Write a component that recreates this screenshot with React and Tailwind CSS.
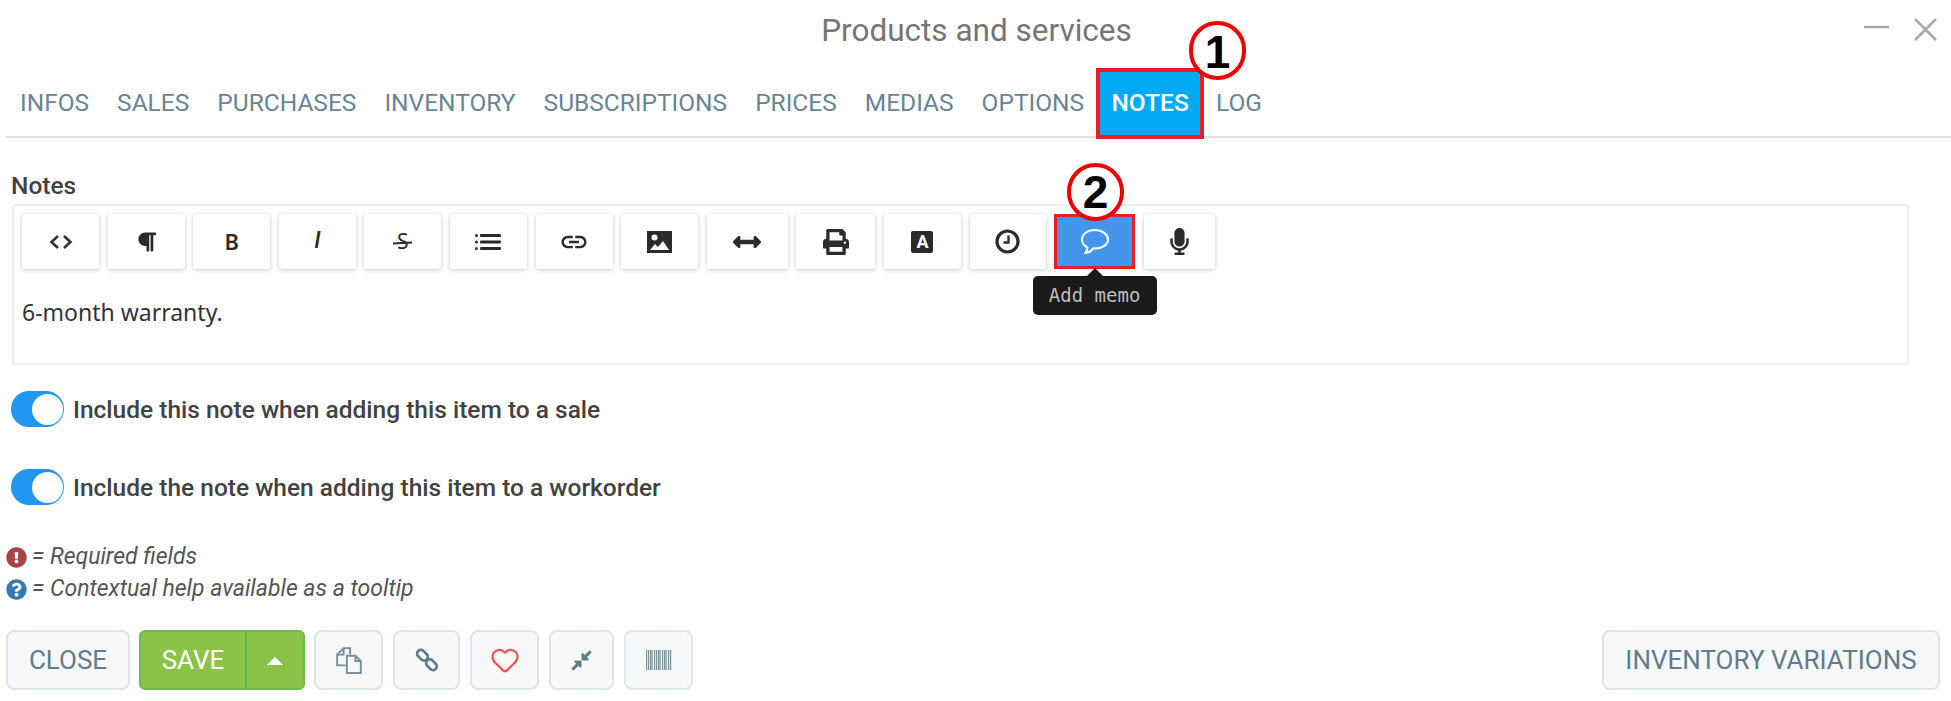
import { FaArrowsAltH, FaCompressAlt, FaExclamationCircle, FaMicrophone, FaParagraph, FaPrint, FaQuestionCircle } from "react-icons/fa";
import { MdLink } from "react-icons/md";
import { Heart } from "lucide-react";

const TABS = ["INFOS", "SALES", "PURCHASES", "INVENTORY", "SUBSCRIPTIONS", "PRICES", "MEDIAS", "OPTIONS"];

const CodeIcon = () => (
  <svg width="24" height="16" viewBox="0 0 24 16" fill="none" stroke="#333" strokeWidth="2.6">
    <path d="M9 2 2.5 8 9 14M15 2l6.500 6L15 14" />
  </svg>
);

const ListIcon = () => (
  <svg width="26" height="18" viewBox="0 0 26 18" fill="#2b2b2b">
    <rect x="0" y="1" width="3" height="3" rx="1.500" />
    <rect x="0" y="7.500" width="3" height="3" rx="1.500" />
    <rect x="0" y="14" width="3" height="3" rx="1.500" />
    <rect x="5" y="1" width="21" height="3" rx="1" />
    <rect x="5" y="7.500" width="21" height="3" rx="1" />
    <rect x="5" y="14" width="21" height="3" rx="1" />
  </svg>
);

const ImageIcon = () => (
  <svg width="25" height="22" viewBox="0 0 25 22">
    <rect width="25" height="22" fill="#2b2b2b" />
    <circle cx="7.500" cy="6.500" r="3" fill="#fff" />
    <path d="M3 19l5-6 3 3 5-6 6 9z" fill="#fff" />
  </svg>
);

const ClockIcon = () => (
  <svg width="25" height="25" viewBox="0 0 25 25" fill="none" stroke="#2b2b2b">
    <circle cx="12.500" cy="12.500" r="10.500" strokeWidth="3.200" />
    <path d="M13.500 6.500v7H8.500" strokeWidth="2.400" />
  </svg>
);

const BubbleIcon = () => (
  <svg width="30" height="28" viewBox="0 0 30 28" fill="none" stroke="#fff" strokeWidth="2">
    <path d="M15 2C7.500 2 2 6 2 11.500c0 3.500 2.300 6.300 5.500 8-.3 2.200-1 3.800-2 5.500 3-.5 6-2.300 7.700-4.700.6.100 1.200.200 1.800.200 7.500 0 13-4 13-9S22.500 2 15 2z" />
  </svg>
);

const CopyIcon = () => (
  <svg width="28" height="28" viewBox="0 0 26 26" fill="none" stroke="#78909c" strokeWidth="1.800">
    <path d="M10 18H2V8l6-6h6v6" />
    <path d="M8 2v6H2" />
    <path d="M11 9h8l5 5v11H11z" fill="#f5f7f9" />
    <path d="M19 9v5h5" />
  </svg>
);

const ChainIcon = () => (
  <svg width="24" height="24" viewBox="0 0 24 24" fill="none" stroke="#607d8b" strokeWidth="2.600">
    <rect x="1.500" y="3.500" width="12" height="7.500" rx="3.700" transform="rotate(45 7.500 7.200)" />
    <rect x="10.500" y="13" width="12" height="7.500" rx="3.700" transform="rotate(45 16.500 16.700)" />
  </svg>
);

const BarcodeIcon = () => (
  <svg width="26" height="20" viewBox="0 0 26 20" fill="#78909c">
    {[0, 2, 4, 5.500, 8, 10, 12, 13.500, 16, 18, 19.500, 22, 24].map((x) => (
      <rect key={x} x={x} y="0" width="1.200" height="20" />
    ))}
  </svg>
);

const StrikeIcon = () => (
  <span className="relative flex h-[24px] w-[19px] items-center justify-center font-['Noto_Sans',sans-serif] text-[21px] text-[#2b2b2b]">
    S
    <span className="absolute left-0 right-0 top-[12px] h-[1.500px] -rotate-3 bg-[#2b2b2b]" />
  </span>
);

const TOOLBAR = [
  { w: "w-[77px]", icon: <CodeIcon /> },
  { w: "w-[77px]", icon: <FaParagraph className="h-[22px] w-[19px] text-[#2b2b2b]" /> },
  { w: "w-[77px]", icon: <span className="font-['Noto_Sans',sans-serif] text-[22px] font-semibold text-[#2b2b2b]">B</span> },
  { w: "w-[77px]", icon: <span className="font-['Roboto',sans-serif] text-[23px] font-medium italic text-[#2b2b2b]">I</span> },
  { w: "w-[77px]", icon: <StrikeIcon /> },
  { w: "w-[77px]", icon: <ListIcon /> },
  { w: "w-[77px]", icon: <MdLink className="text-[30px] text-[#2b2b2b]" /> },
  { w: "w-[77px]", icon: <ImageIcon /> },
  { w: "w-[81px]", icon: <FaArrowsAltH className="text-[28px] text-[#2b2b2b]" /> },
  { w: "w-[79px]", icon: <FaPrint className="text-[26px] text-[#2b2b2b]" /> },
  {
    w: "w-[77px]",
    icon: (
      <span className="flex h-[22px] w-[22px] items-center justify-center rounded-[2px] bg-[#2b2b2b] font-['Roboto',sans-serif] text-[18px] font-bold text-white">
        A
      </span>
    ),
  },
  { w: "w-[76px]", icon: <ClockIcon /> },
];

const Toggle = ({ label }) => (
  <div className="flex h-[36px] items-center">
    <div className="ml-[11px] flex h-[36px] w-[53px] items-center justify-end rounded-full bg-[#2196f3] pr-[1px]">
      <div className="h-[31px] w-[31px] rounded-full bg-white" />
    </div>
    <span className="ml-[9px] pt-[3px] text-[24.500px] font-medium text-[#424242]">{label}</span>
  </div>
);

const OutlineButton = ({ className, children }) => (
  <button className={`flex h-[60px] items-center justify-center rounded-[8px] border-2 border-[#dfe5e9] bg-[#f5f7f9] text-[26px] text-[#607d8b] ${className}`}>
    {children}
  </button>
);

export default function App() {
  return (
    <div className="relative h-[701px] w-[1951px] overflow-hidden bg-white font-['Roboto',sans-serif]">
      <header className="grid h-[68px] grid-cols-[1fr_auto_1fr] pl-[2px]">
        <div />
        <h1 className="pt-[10px] text-[31.500px] leading-[42px] text-[#757575]">Products and services</h1>
        <div className="flex items-start justify-end gap-[25px] pr-[14px] pt-[18px]">
          <svg width="25" height="23" viewBox="0 0 25 23" stroke="#a8a8a8" strokeWidth="2.500">
            <path d="M0 9h25" />
          </svg>
          <svg width="23" height="23" viewBox="0 0 23 23" stroke="#a8a8a8" strokeWidth="2.500">
            <path d="M1 1l21 21M22 1 1 22" />
          </svg>
        </div>
      </header>

      <nav className="ml-[6px] flex h-[70px] items-start border-b-2 border-[#e3e3e3] text-[24.500px] text-[#688593]">
        {TABS.map((tab) => (
          <div key={tab} className="flex h-[68px] items-center px-[14px] pt-[3px]">
            {tab}
          </div>
        ))}
        <div className="-ml-[2px] flex h-[71px] w-[108px] items-center justify-center border-[4px] border-[#ee1c25] bg-[#03a9f4] font-medium text-white">
          NOTES
        </div>
        <div className="flex h-[68px] items-center pl-[12px] pt-[3px]">LOG</div>
      </nav>

      <main className="ml-[11px] mr-[42px] mt-[36px]">
        <div className="mb-[6px] h-[24px] text-[24.500px] font-medium leading-[24px] text-[#424242]">Notes</div>
        <div className="ml-[1px] h-[161px] rounded-[3px] border-2 border-[#eeeeee]">
          <div className="flex gap-[8.600px] pl-[8px] pt-[8px]">
            {TOOLBAR.map((item, i) => (
              <div key={i} className={`flex h-[55px] items-center justify-center rounded-[3px] bg-white shadow-[0_1px_4px_rgba(0,0,0,0.22)] ${item.w}`}>
                {item.icon}
              </div>
            ))}
            <div className="relative flex h-[55px] w-[81px] items-center justify-center border-[3px] border-[#ee1c25] bg-[#4496ec]">
              <BubbleIcon />
              <div className="absolute left-1/2 top-[51px] -translate-x-1/2">
                <div className="mx-auto h-0 w-0 border-x-[8px] border-b-[8px] border-x-transparent border-b-[#1a1a1a]" />
                <div className="flex h-[39px] w-[124px] items-center justify-center rounded-[5px] bg-[#1a1a1a] font-['DejaVu_Sans_Mono',monospace] text-[19px] text-[#bdbdbd]">
                  Add memo
                </div>
              </div>
            </div>
            <div className="flex h-[55px] w-[71px] items-center justify-center rounded-[3px] bg-white shadow-[0_1px_4px_rgba(0,0,0,0.22)]">
              <FaMicrophone className="text-[27px] text-[#2b2b2b]" />
            </div>
          </div>
          <p className="ml-[8px] mt-[28px] font-['Noto_Sans',sans-serif] text-[23px] leading-[30px] text-[#333333]">6-month warranty.</p>
        </div>
      </main>

      <section className="mt-[26px] flex flex-col gap-[42px]">
        <Toggle label="Include this note when adding this item to a sale" />
        <Toggle label="Include the note when adding this item to a workorder" />
      </section>

      <section className="ml-[6px] mt-[36px] text-[23px] italic leading-[32px] text-[#555555]">
        <div className="flex items-center gap-[5px]">
          <FaExclamationCircle className="text-[21px] text-[#a94442]" />
          <span>= Required fields</span>
        </div>
        <div className="flex items-center gap-[5px]">
          <FaQuestionCircle className="text-[21px] text-[#337ab7]" />
          <span>= Contextual help available as a tooltip</span>
        </div>
      </section>

      <footer className="mx-[11px] ml-[6px] mt-[25px] flex items-center justify-between">
        <div className="flex items-center">
          <OutlineButton className="w-[124px]">CLOSE</OutlineButton>
          <div className="ml-[9px] flex h-[60px] w-[166px] rounded-[6px] border-2 border-[#6cbb4d] bg-[#8bc34a] text-[26px] text-white">
            <div className="flex w-[106px] items-center justify-center border-r-2 border-[#63b24b]">SAVE</div>
            <div className="flex flex-1 items-center justify-center">
              <div className="mt-[2px] h-0 w-0 border-x-[8px] border-b-[8px] border-x-transparent border-b-white" />
            </div>
          </div>
          <OutlineButton className="ml-[9px] w-[69px]"><CopyIcon /></OutlineButton>
          <OutlineButton className="ml-[10px] w-[67px]"><ChainIcon /></OutlineButton>
          <OutlineButton className="ml-[10px] w-[69px]"><Heart size={30} strokeWidth={1.8} color="#ef5350" /></OutlineButton>
          <OutlineButton className="ml-[10px] w-[65px]"><FaCompressAlt className="text-[23px]" /></OutlineButton>
          <OutlineButton className="ml-[10px] w-[69px]"><BarcodeIcon /></OutlineButton>
        </div>
        <OutlineButton className="w-[338px]">INVENTORY VARIATIONS</OutlineButton>
      </footer>

      <div className="absolute left-[1189px] top-[21px] flex h-[59px] w-[57px] items-center justify-center rounded-full border-[4px] border-[#f00000] bg-white pt-[3px] font-['Liberation_Sans',sans-serif] text-[46px] font-bold text-black">
        1
      </div>
      <div className="absolute left-[1067px] top-[163px] flex h-[58px] w-[57px] items-center justify-center rounded-full border-[4px] border-[#f00000] bg-white font-['Liberation_Sans',sans-serif] text-[46px] font-bold text-black">
        2
      </div>
    </div>
  );
}
